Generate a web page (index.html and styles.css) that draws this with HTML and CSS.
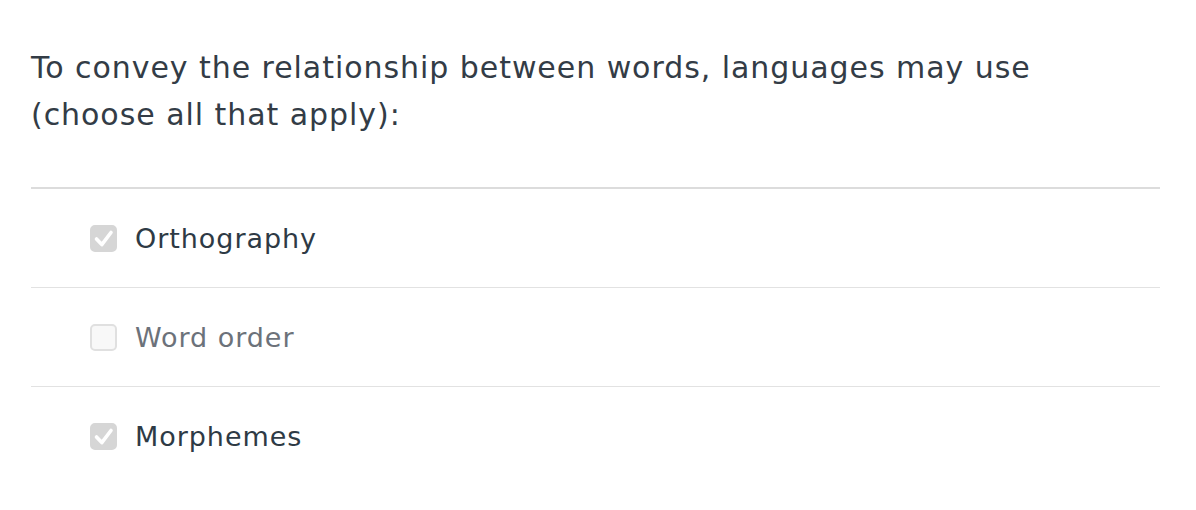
FILE: index.html
```html
<!DOCTYPE html>
<html>
<head>
<meta charset="utf-8">
<link rel="stylesheet" href="styles.css">
</head>
<body>
<div class="quiz">
  <p class="question">To convey the relationship between words, languages may use<br>(choose all that apply):</p>
  <ul class="options">
    <li class="option">
      <span class="box checked"><svg viewBox="0 0 27 27" width="27" height="27"><path d="M6.5 14l5.3 5.6L21 7.5" fill="none" stroke="#fff" stroke-width="3.6" stroke-linecap="round" stroke-linejoin="round"/></svg></span>
      <span class="label">Orthography</span>
    </li>
    <li class="option">
      <span class="box"></span>
      <span class="label muted">Word order</span>
    </li>
    <li class="option">
      <span class="box checked"><svg viewBox="0 0 27 27" width="27" height="27"><path d="M6.5 14l5.3 5.6L21 7.5" fill="none" stroke="#fff" stroke-width="3.6" stroke-linecap="round" stroke-linejoin="round"/></svg></span>
      <span class="label">Morphemes</span>
    </li>
  </ul>
</div>
</body>
</html>
```
FILE: styles.css
```css
html, body {
  margin: 0;
  padding: 0;
  background: #fff;
}
.quiz {
  width: 1129px;
  margin-left: 31px;
  padding-top: 44px;
  font-family: "DejaVu Sans", "Noto Sans", sans-serif;
}
.question {
  margin: 0;
  font-size: 30px;
  letter-spacing: 0.95px;
  line-height: 47px;
  color: #333c46;
  padding-bottom: 49px;
  border-bottom: 2px solid #dcdcdc;
}
.options {
  list-style: none;
  margin: 0;
  padding: 0;
}
.option {
  display: flex;
  align-items: center;
  height: 98px;
  padding-left: 59px;
  border-bottom: 1px solid #e2e2e2;
}
.option:last-child {
  border-bottom: none;
}
.box {
  flex: none;
  width: 27px;
  height: 27px;
  box-sizing: border-box;
  border-radius: 5px;
  border: 2px solid #e0e0e0;
  background: #f8f8f8;
  position: relative;
  margin-right: 18px;
}
.box svg {
  position: absolute;
  left: -2px;
  top: -2px;
}
.box.checked {
  background: #d6d6d6;
  border-color: #d6d6d6;
}
.label {
  font-size: 27px;
  letter-spacing: 0.95px;
  color: #2e3a45;
}
.label.muted {
  color: #6c727a;
}
```
